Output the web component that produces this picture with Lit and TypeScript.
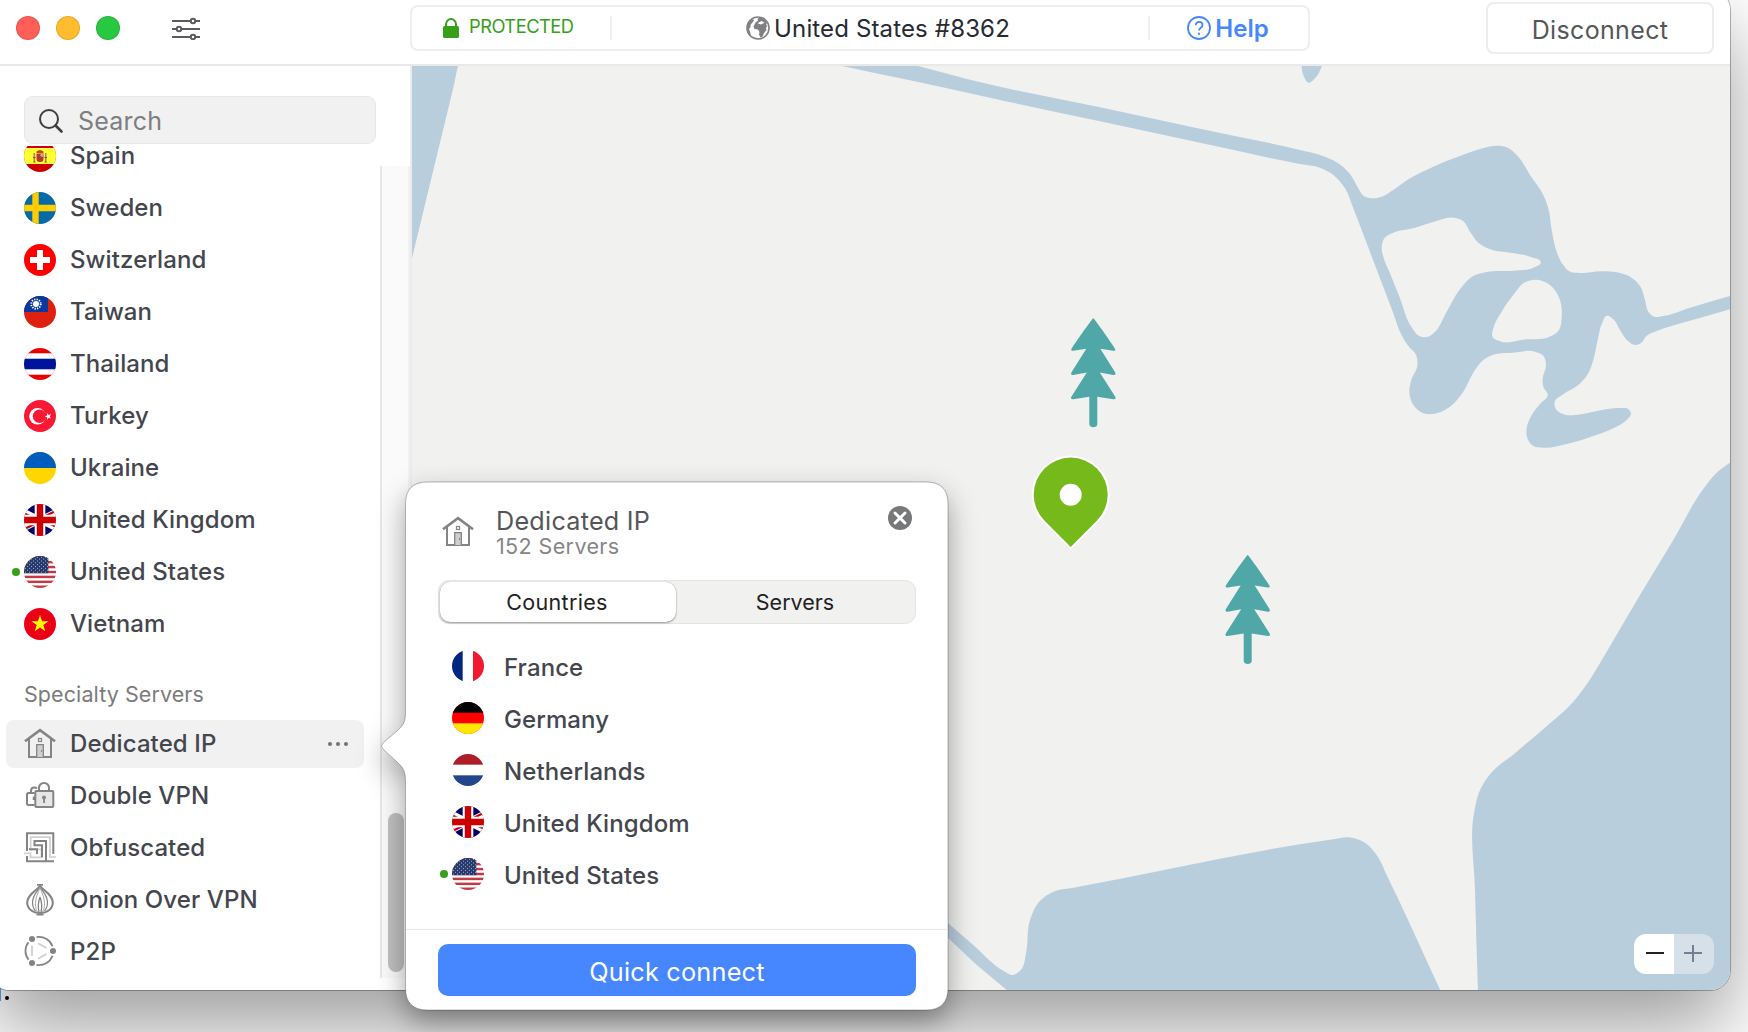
import { LitElement, html, css, svg } from "lit";
import { customElement, property } from "lit/decorators.js";

type Pt = [number, number];

/* Smooth curve through points; handles are a third of each segment. */
function smooth(pts: Pt[], closed = false): string {
  const n = pts.length;
  const at = (i: number): Pt => (closed ? pts[(i + n) % n] : pts[Math.max(0, Math.min(n - 1, i))]);
  const dir = (i: number): Pt => {
    const a = at(i - 1), b = at(i), c = at(i + 1);
    const l1 = Math.hypot(b[0] - a[0], b[1] - a[1]) || 1;
    const l2 = Math.hypot(c[0] - b[0], c[1] - b[1]) || 1;
    const x = ((b[0] - a[0]) / l1) * l2 + ((c[0] - b[0]) / l2) * l1;
    const y = ((b[1] - a[1]) / l1) * l2 + ((c[1] - b[1]) / l2) * l1;
    const l = Math.hypot(x, y) || 1;
    return [x / l, y / l];
  };
  let d = `M${pts[0][0].toFixed(1)} ${pts[0][1].toFixed(1)}`;
  const end = closed ? n : n - 1;
  for (let i = 0; i < end; i++) {
    const p = at(i), q = at(i + 1);
    const h = Math.hypot(q[0] - p[0], q[1] - p[1]) / 3;
    const u = dir(i), v = dir(i + 1);
    const c = [p[0] + u[0] * h, p[1] + u[1] * h, q[0] - v[0] * h, q[1] - v[1] * h, q[0], q[1]];
    d += "C" + c.map((k) => k.toFixed(1)).join(" ");
  }
  return closed ? d + "Z" : d;
}

const place = (ox: number, oy: number, flat: number[]): Pt[] => {
  const out: Pt[] = [];
  for (let i = 0; i < flat.length; i += 2) out.push([ox + flat[i] / 3, oy + flat[i + 1] / 3]);
  return out;
};

const lakeOuter = smooth(place(1300, 50, [
  -1260, 22, -1146, 48, -987, 90, -600, 172, -300, 236, 0, 300, 60, 315, 110, 337, 150, 372, 175, 415, 190, 437, 215, 445, 245, 440, 280, 420, 330, 385,
  400, 350, 480, 318, 550, 294, 590, 287, 620, 292, 650, 315, 690, 375, 730, 435, 745, 475, 755, 540, 770, 605,
  788, 643, 808, 664, 840, 669, 900, 664, 950, 667, 990, 680, 1020, 708, 1035, 750, 1045, 785, 1062, 800, 1090, 798,
  1170, 773, 1290, 738, 1500, 678, 1500, 718, 1290, 778, 1170, 812, 1070, 843, 1040, 857, 1022, 880, 1005, 885, 985, 874, 960, 840,
  940, 808, 921, 797, 907, 818, 893, 870, 880, 930, 862, 975, 835, 1005, 790, 1033, 764, 1056, 768, 1078, 795, 1094,
  825, 1095, 880, 1085, 960, 1074, 985, 1077, 993, 1090, 980, 1110, 940, 1135, 880, 1158, 800, 1182, 730, 1193,
  700, 1188, 682, 1165, 680, 1135, 695, 1095, 720, 1062, 743, 1035, 730, 1010, 728, 985, 738, 945, 730, 917,
  705, 905, 640, 908, 585, 913, 550, 930, 520, 968, 490, 1025, 450, 1070, 410, 1090, 370, 1090, 340, 1065,
  328, 1025, 334, 990, 352, 948, 348, 914, 325, 888, 303, 852, 280, 790, 240, 685, 200, 580, 160, 475, 135, 415,
  100, 375, 60, 353, 0, 342, -300, 278, -600, 214, -900, 150, -1170, 91, -1374, 48, -1460, 30,
]));

const islandWest = smooth(place(1300, 50, [
  245, 595, 253, 565, 280, 548, 340, 535, 410, 513, 460, 503, 488, 512, 510, 545, 535, 578, 570, 598, 630, 608,
  690, 620, 722, 638, 700, 653, 640, 662, 560, 666, 520, 678, 480, 718, 440, 785, 405, 845, 385, 860, 358, 858,
  335, 832, 300, 745, 270, 670, 250, 620,
]), true);

const islandEast = smooth(place(1300, 50, [
  710, 689, 750, 705, 778, 745, 785, 800, 775, 843, 745, 862, 680, 868, 600, 874, 578, 862, 580, 835, 605, 785,
  640, 735, 675, 697,
]), true);

const cove = smooth(place(1300, 50, [3, 40, 12, 80, 26, 98, 45, 85, 70, 40]));

const eastSea = smooth(place(1440, 440, [
  885, 60, 870, 68, 830, 98, 790, 147, 700, 300, 600, 465, 500, 635, 455, 710, 400, 785, 330, 850, 230, 935,
  150, 1003, 118, 1055, 102, 1120, 105, 1350, 114, 1660,
])) + "L1740 1000V450Z";

const southSea = smooth(place(940, 820, [
  -100, 200, 25, 310, 100, 375, 190, 452, 218, 465, 243, 449, 258, 400, 270, 300, 295, 248, 345, 213, 400, 203,
  1180, 58, 1225, 52, 1270, 65, 1312, 108, 1340, 165, 1510, 530,
])) + "L1010 996.7 L1006.7 990 L976.7 965 L948 938 L900 892Z";

const TREE =
  "M0 0C1 0 21.5 29.500 22 31C22.300 32.500 21 32.700 20 32.500L7 30.500L21.800 54C22.800 56 22 57 20 56.700L6.500 54.200L21.800 78.300C23 80.300 22 81.200 20 80.900L4 78.500V106C4 110 -4 110 -4 106V78.500L-20 80.900C-22 81.200 -23 80.300 -21.800 78.300L-6.500 54.200L-20 56.700C-22 57 -22.800 56 -21.800 54L-7 30.500L-20 32.500C-21 32.700 -22.300 32.500 -22 31C-21.500 29.500 -1 0 0 0Z";

@customElement("map-view")
export class MapView extends LitElement {
  static styles = css`
    :host { display: block; position: relative; background: #f1f1f0; overflow: hidden; }
    .land { display: block; width: 100%; height: 100%; }
    .zoom { position: absolute; right: 16px; bottom: 16px; display: flex; width: 80px; height: 40px; border-radius: 12px; overflow: hidden; }
    .key { flex: 1; display: grid; place-items: center; }
    .out { background: #fff; padding-left: 2px; }
    .in { background: #d5e0e9; padding-right: 2px; }
  `;
  render() {
    return html`
      <svg class="land" viewBox="412 66 1318 924" preserveAspectRatio="none">
        <g fill="#b9cedd">
          <path d="M405 60H460.500C457 66 456 76 454 85L405 287Z"></path>
          <path d=${lakeOuter}></path>
          <path d=${cove}></path>
          <path d=${eastSea}></path>
          <path d=${southSea}></path>
        </g>
        <g fill="#f1f1f0">
          <path d=${islandWest}></path>
          <path d=${islandEast}></path>
        </g>
        <g fill="#4fa8a7">
          <path transform="translate(1093.300 318.300)" d=${TREE}></path>
          <path transform="translate(1247.700 555)" d=${TREE}></path>
        </g>
        <path d="M1044.600 520.800A37 37 0 1 1 1096.800 520.800L1070.700 547Z" fill="#76b91b" stroke="#fff" stroke-width="4" paint-order="stroke"></path>
        <circle cx="1070.700" cy="494.700" r="11" fill="#fff"></circle>
      </svg>
      <div class="zoom">
        <div class="key out"><svg width="18" height="18"><path d="M0 8H18" stroke="#1f2126" stroke-width="2"></path></svg></div>
        <div class="key in"><svg width="18" height="18"><path d="M0 8H18M9 -1V17" stroke="#737f94" stroke-width="2"></path></svg></div>
      </div>
    `;
  }
}

const star = (cx: number, cy: number, r: number, rot = -90, inner = 0.382) => {
  let s = "";
  for (let i = 0; i < 10; i++) {
    const a = ((rot + i * 36) * Math.PI) / 180;
    const k = i % 2 ? r * inner : r;
    s += `${(cx + Math.cos(a) * k).toFixed(2)},${(cy + Math.sin(a) * k).toFixed(2)} `;
  }
  return s;
};

const bars = (a: string, b: string, c: string) => svg`
  <rect width="32" height="32" fill=${b}></rect>
  <rect width="32" height="10.670" fill=${a}></rect>
  <rect y="21.330" width="32" height="10.670" fill=${c}></rect>`;

const FLAGS: Record<string, unknown> = {
  Spain: svg`<rect width="32" height="32" fill="#c00"></rect><rect y="8" width="32" height="16" fill="#ff3"></rect>
    <path d="M12.500 13.500h7v5.500q0 3-3.500 3t-3.500-3z" fill="#c6301c"></path>
    <path d="M12.500 11.500q3.500-3 7 0v1.500h-7z" fill="#b8501e"></path><circle cx="17.800" cy="15.300" r="1.500" fill="#c9a9a9"></circle>
    <circle cx="16" cy="17.500" r="1.200" fill="#4a5a9a"></circle>
    <path d="M10.300 13v9M21.700 13v9" stroke="#a5876a" stroke-width="1.600"></path>
    <path d="M9 17.500h2.600M20.400 17.500H23M9.200 22h2.200M20.600 22h2.200" stroke="#b8401c" stroke-width="1.200"></path>`,
  Sweden: svg`<rect width="32" height="32" fill="#066aa7"></rect><path d="M8.300 0h6.400v32H8.300zM0 12.800h32v6.400H0z" fill="#fecc00"></path>`,
  Switzerland: svg`<rect width="32" height="32" fill="#f00"></rect><path d="M13 6h6v7h7v6h-7v7h-6v-7H6v-6h7z" fill="#fff"></path>`,
  Taiwan: svg`<rect width="32" height="32" fill="#de2110"></rect><rect width="24" height="16" fill="#08399c"></rect>
    <circle cx="12" cy="8" r="4.700" fill="none" stroke="#fff" stroke-width="1.900" stroke-dasharray="1.250 1.210"></circle><circle cx="12" cy="8" r="3" fill="#fff"></circle>`,
  Thailand: svg`<rect width="32" height="32" fill="#e90000"></rect><rect y="5.300" width="32" height="21.400" fill="#fff"></rect><rect y="10.700" width="32" height="10.600" fill="#00149b"></rect>`,
  Turkey: svg`<rect width="32" height="32" fill="#fb1834"></rect><circle cx="13.500" cy="16.300" r="8.300" fill="#fff"></circle><circle cx="15.500" cy="16.300" r="6.700" fill="#fb1834"></circle>
    <polygon points=${star(24.3, 16.4, 3.6, 180)} fill="#fff"></polygon>`,
  Ukraine: svg`<rect width="32" height="32" fill="#ffd600"></rect><rect width="32" height="16" fill="#005cbd"></rect>`,
  "United Kingdom": svg`<clipPath id="saltire"><path d="M30 15H60V30ZM30 15V30H0ZM30 15H0V0ZM30 15V0H60Z"></path></clipPath>
    <g transform="scale(1.06667) translate(-15 0)" fill="none"><path fill="#006" d="M0 0h60v30H0z"></path>
    <path d="M0 0L60 30M60 0L0 30" stroke="#fff" stroke-width="6"></path>
    <path d="M0 0L60 30M60 0L0 30" stroke="#c00" stroke-width="4" clip-path="url(#saltire)"></path>
    <path d="M30 0V30M0 15H60" stroke="#fff" stroke-width="10"></path>
    <path d="M30 0V30M0 15H60" stroke="#c00" stroke-width="6"></path></g>`,
  "United States": svg`<rect width="32" height="32" fill="#fff"></rect>
    ${[0, 1, 2, 3, 4, 5, 6].map((i) => svg`<rect y=${i * 4.92} width="32" height="2.460" fill="#c23a45"></rect>`)}
    <rect width="24.300" height="17.200" fill="#26396c"></rect>
    ${[0, 1, 2, 3, 4, 5, 6, 7, 8].map((r) => svg`<path d=${`M${r % 2 ? 3 : 1} ${1.3 + r * 1.85}H24`} stroke="#b9c0d4" stroke-width=".9" stroke-dasharray="1 3"></path>`)}`,
  Vietnam: svg`<rect width="32" height="32" fill="#ec0015"></rect><polygon points=${star(16, 16, 9)} fill="#ff0"></polygon>`,
  France: svg`<rect width="32" height="32" fill="#fff"></rect><rect width="10.670" height="32" fill="#00267f"></rect><rect x="21" width="11" height="32" fill="#f31830"></rect>`,
  Germany: bars("#000", "#f00", "#ffe600"),
  Netherlands: bars("#ae1c28", "#fff", "#21468b"),
};

const G = "#848484";
const L = "#cfcfcf";
const ICONS: Record<string, unknown> = {
  "Dedicated IP": svg`<g fill="none" stroke=${G} stroke-width="2"><path d="M1 13.300L16 2.200L31 13.300" stroke-width="2.600"></path><path d="M5 11V29H27V11"></path>
    <path d="M12.700 29V16.700H19.300V29" fill="#cfcfcf" stroke-width="1.300"></path><rect x="14.500" y="10.500" width="3" height="3" stroke-width="1.200"></rect><path d="M17.500 22v2" stroke-width="1"></path></g>`,
  "Double VPN": svg`<g fill="none" stroke=${G} stroke-width="2"><path d="M10.500 25H4.500Q3 25 3 23.500V14.500Q3 13 4.500 13H10.500M7 13V11Q7 7.500 10 7.500Q12 7.500 13 8.500"></path>
    <path d="M10 16.500v3.500" stroke-width="2.500"></path>
    <path d="M15 11V8.500Q15 3 20 3T25 8.500V11"></path><rect x="11.300" y="11" width="18" height="16" rx="1" fill="#e6e6e6"></rect></g>
    <circle cx="20" cy="17.500" r="2" fill=${G}></circle><rect x="19.200" y="18" width="1.800" height="5" fill=${G}></rect>`,
  Obfuscated: svg`<g fill="none" stroke-width="1.700"><path d="M0 21.300H6.500V25.300H17.500V17.300H6.700V5.200H26V25H32" stroke=${L}></path>
    <g stroke=${G} stroke-width="2"><path d="M3 19V1.300H29.300V22"></path><path d="M3 24V29.200H30"></path><path d="M22 29V9H10.500V13.300H18V25.300"></path><path d="M5 17.300H13V22"></path></g></g>`,
  "Onion Over VPN": svg`<g fill="none" stroke=${G}><path d="M16 2C12 7 3.200 11 3.200 18.500C3.200 25 9 29 16 29S28.800 25 28.800 18.500C28.800 11 20 7 16 2Z" stroke-width="2"></path>
    <path d="M15.500 4C9.500 11 5 19 11.500 27M16.500 4C22.500 11 27 19 20.500 27" stroke-width="1.200"></path>
    <path d="M15.500 5C12 13 9.500 21 13.500 28M16.500 5C20 13 22.500 21 18.500 28" stroke=${"#a9a9a9"} stroke-width="1"></path>
    <path d="M16 13C13.500 20 14 24 15 28M16 13C18.500 20 18 24 17 28" stroke-width="1.300"></path><path d="M12.500 30.700H19.500M13 .8H19" stroke-width="1.800"></path></g>`,
  P2P: svg`<g fill="none" stroke=${G} stroke-width="1.800"><path d="M4.500 6.300A14 14 0 0 0 4.500 23.700"></path><path d="M12.500 1.200A14.300 14.300 0 0 1 28.500 10.300"></path><path d="M12.500 28.800A14.300 14.300 0 0 0 28.500 19.700"></path></g>
    <path d="M8 9.700V20M14 7.300L22.500 12M14 22.700L22.500 18" stroke=${L} stroke-width="1.800"></path>
    <g fill=${G}><circle cx="8" cy="3" r="3"></circle><circle cx="29" cy="15" r="3"></circle><circle cx="8" cy="27" r="3"></circle></g>`,
};

@customElement("server-row")
export class ServerRow extends LitElement {
  @property() name = "";
  @property({ type: Boolean }) active = false;
  @property({ type: Boolean }) selected = false;
  static styles = css`
    :host { display: block; box-sizing: border-box; height: 52px; padding: 2px 0; }
    .row { position: relative; display: flex; align-items: center; height: 48px; padding-left: 18px; border-radius: 8px;
      font: 500 24px Inter, "Liberation Sans", sans-serif; letter-spacing: 0.1px; color: #44464e; white-space: nowrap; }
    .selected { background: #f1f1f1; }
    .pic { width: 32px; height: 32px; flex: none; margin-right: var(--row-gap, 14px); }
    .flag { border-radius: 50%; overflow: hidden; }
    .label { position: relative; top: var(--row-drop, -0.5px); }
    .on { position: absolute; left: 6px; top: 20px; width: 8px; height: 8px; border-radius: 50%; background: #36a01b; }
    .more { margin-left: auto; margin-right: 15px; }
  `;
  render() {
    const flag = FLAGS[this.name];
    return html`<div class="row ${this.selected ? "selected" : ""}">
      ${this.active ? html`<i class="on"></i>` : ""}
      <svg class="pic ${flag ? "flag" : ""}" viewBox="0 0 32 32">${flag ?? ICONS[this.name]}</svg>
      <span class="label">${this.name}</span>
      ${this.selected
        ? html`<svg class="more" width="22" height="6"><g fill="#77777b"><circle cx="3" cy="3" r="2.100"></circle><circle cx="11" cy="3" r="2.100"></circle><circle cx="19" cy="3" r="2.100"></circle></g></svg>`
        : ""}
    </div>`;
  }
}

@customElement("side-panel")
export class SidePanel extends LitElement {
  static styles = css`
    :host { display: grid; grid-template-columns: 380px 1fr; background: #fff; border-right: 2px solid #ebebeb; height: 924px;
      font-family: Inter, "Liberation Sans", sans-serif; }
    .main { display: flex; flex-direction: column; min-width: 0; }
    .search { box-sizing: border-box; display: flex; align-items: center; width: 352px; height: 48px; margin: 30px 0 2px 24px; padding: 1px 0 0 13px;
      background: #f1f1f1; border: 1px solid #e6e6e6; border-radius: 9px; font-size: 25px; color: #7d7e81; flex: none; letter-spacing: 0.2px; }
    .search svg { margin-right: 14px; }
    .list { overflow: hidden; padding: 0 16px 0 6px; height: 840px; }
    .first { margin-top: -16px; }
    .group { height: 66px; line-height: 88px; padding-left: 18px; font-size: 21.500px; color: #7b7b7d; letter-spacing: 0.080px; margin-bottom: 2px; }
    .track { margin-top: 100px; height: 812px; box-sizing: border-box; border-left: 2px solid #e7e7e7; background: #fafafa; border-right: 2px solid #f1f1f1; }
    .thumb { width: 16px; height: 159px; margin: 647px 0 0 6px; border-radius: 8px; background: #bfbfbf; }
  `;
  render() {
    const countries = ["Spain", "Sweden", "Switzerland", "Taiwan", "Thailand", "Turkey", "Ukraine", "United Kingdom", "United States", "Vietnam"];
    const special = ["Dedicated IP", "Double VPN", "Obfuscated", "Onion Over VPN", "P2P"];
    return html`
      <div class="main">
        <div class="search">
          <svg width="26" height="26" fill="none" stroke="#3e3e40"><circle cx="11" cy="11" r="9" stroke-width="2"></circle><path d="M17.500 17.500L23.500 23.500" stroke-width="2.600" stroke-linecap="round"></path></svg>
          Search
        </div>
        <div class="list">
          <div class="first">${countries.map((c) => html`<server-row name=${c} ?active=${c === "United States"}></server-row>`)}</div>
          <div class="group">Specialty Servers</div>
          ${special.map((c) => html`<server-row name=${c} ?selected=${c === "Dedicated IP"}></server-row>`)}
        </div>
      </div>
      <div class="track"><div class="thumb"></div></div>
    `;
  }
}

@customElement("title-bar")
export class TitleBar extends LitElement {
  static styles = css`
    :host { display: grid; grid-template-columns: 410px 900px 1fr; height: 64px; border-bottom: 2px solid #e9e9e9; background: #fff;
      font-family: Inter, "Liberation Sans", sans-serif; align-items: start; white-space: nowrap; }
    .left { display: flex; align-items: center; gap: 16px; padding: 16px 0 0 16px; }
    .light { width: 24px; height: 24px; border-radius: 50%; box-sizing: border-box; border: 1px solid rgba(0, 0, 0, 0.1); }
    .red { background: #ff5f57; } .amber { background: #febc2e; } .green { background: #28c840; }
    .tune { margin-left: 36px; }
    .status { box-sizing: border-box; display: grid; grid-template-columns: 198px 2px 536px 2px 1fr; align-items: center; height: 46px; margin-top: 5px; border: 2px solid #ededf2; border-radius: 8px; }
    .cell { display: flex; align-items: center; height: 42px; }
    .rule { height: 24px; background: #ededf2; }
    .safe { padding-left: 31px; gap: 10px; color: #36a01b; font-size: 18.300px; letter-spacing: -0.5px; }
    .safe span { position: relative; top: -2px; }
    .place { justify-content: center; gap: 4px; color: #262a33; font-size: 24px; padding-right: 4px; letter-spacing: 0.14px; }
    .help { justify-content: center; gap: 4px; color: #4687ff; font-size: 24px; font-weight: 600; padding-right: 2px; }
    .off { box-sizing: border-box; display: grid; place-items: center; justify-self: end; width: 228px; height: 52px; margin: 2px 16px 0 0; padding-top: 3px; border: 2px solid #ededf2; border-radius: 8px; font-size: 25px; color: #55565a; letter-spacing: 0.36px; }
  `;
  render() {
    return html`
      <div class="left">
        <i class="light red"></i><i class="light amber"></i><i class="light green"></i>
        <svg class="tune" width="28" height="24" fill="none" stroke="#5c5c60" stroke-width="2">
          <path d="M0 5H18.500M24 5H28M0 13H4M10 13H28M0 21H18.500M24 21H28"></path>
          <circle cx="21" cy="5" r="2.200"></circle><circle cx="7" cy="13" r="2.200"></circle><circle cx="21" cy="21" r="2.200"></circle>
        </svg>
      </div>
      <div class="status">
        <div class="cell safe">
          <svg width="16" height="20"><rect y="8" width="16" height="12" rx="1.500" fill="#36a01b"></rect><path d="M3 9V6.500a5 5.500 0 0 1 10 0V9" fill="none" stroke="#36a01b" stroke-width="2"></path></svg>
          <span>PROTECTED</span>
        </div>
        <i class="rule"></i>
        <div class="cell place">
          <svg width="24" height="24"><circle cx="12" cy="12" r="11" fill="#fff" stroke="#808083" stroke-width="1.600"></circle>
            <path d="M9.500 6.500L12 4.500L11.500 2.500L15 1.500L19 4L21.500 8L20 7.500L21 10.500L20 12L20.500 14L18 17L16.500 20.500L14.500 21.500L13 18.500L13.500 16L12 13.500L8.500 13L7.500 10.500Z" fill="#808083"></path>
            <path d="M1.500 8L4 5L7 3L8 4.500L6 7L4.500 9L4.500 11L3 13L4.200 16L5 19.500L2.500 16.500L1 12Z" fill="#808083"></path><path d="M11.500 7.200L15 8.400L18.500 6.800L15.500 5Z" fill="#fff"></path></svg>
          <span>United States #8362</span>
        </div>
        <i class="rule"></i>
        <div class="cell help">
          <svg width="24" height="24" fill="none" stroke="#4687ff" stroke-width="1.800"><circle cx="12" cy="12" r="11"></circle><path d="M8.700 9.300C8.700 4.700 15.500 5 15.500 9.200C15.500 11.800 12 11.800 12 14.500"></path><path d="M12 16.700V18.700" stroke-width="2"></path></svg>
          <span>Help</span>
        </div>
      </div>
      <div class="off">Disconnect</div>
    `;
  }
}

@customElement("detail-popover")
export class DetailPopover extends LitElement {
  static styles = css`
    :host { display: block; font-family: Inter, "Liberation Sans", sans-serif; white-space: nowrap; }
    .shape { position: absolute; left: -60px; top: -60px; overflow: visible; }
    .body { position: relative; display: flex; flex-direction: column; width: 542px; height: 528px; }
    .head { display: flex; height: 98px; padding: 0 36px 0 36px; box-sizing: border-box; }
    .house { margin-top: 34px; width: 32px; height: 32px; }
    .names { margin: 24px auto 0 22px; display: flex; flex-direction: column; }
    .title { font-size: 25.200px; line-height: 30px; color: #55565a; letter-spacing: 0.250px; }
    .count { font-size: 21.500px; line-height: 20px; color: #858588; letter-spacing: 0.380px; }
    .close { margin-top: 24px; }
    .tabs { box-sizing: border-box; display: grid; grid-template-columns: 236px 1fr; flex: none; height: 44px; margin: 0 32px; padding: 1px; border: 1px solid #e4e4e4; border-radius: 11px; background: #f1f1f0; font-size: 21.500px; color: #1f2024; }
    .tab { display: grid; place-items: center; }
    .on { background: #fff; border-radius: 10px; padding-right: 2px; letter-spacing: 0.300px; box-shadow: 0 1px 2px rgba(0, 0, 0, 0.35), 0 0 1px rgba(0, 0, 0, 0.3); }
    .rows { padding: 16px 28px 29px; --row-gap: 20px; --row-drop: 1.500px; }
    .foot { border-top: 1px solid #e9e9eb; padding: 14px 32px 0; }
    .go { height: 52px; border-radius: 10px; background: #4687ff; color: #fff; display: grid; place-items: center; font-size: 25.300px; padding-top: 2px; box-sizing: border-box; letter-spacing: 0.200px; }
  `;
  render() {
    const list = ["France", "Germany", "Netherlands", "United Kingdom", "United States"];
    return html`
      <svg class="shape" width="662" height="648" viewBox="-60 -60 662 648">
        <defs><filter id="sh" x="-20%" y="-20%" width="140%" height="140%"><feDropShadow dx="0" dy="12" stdDeviation="14" flood-color="#000" flood-opacity=".36"></feDropShadow></filter></defs>
        <path filter="url(#sh)" d="M21.500 0H520Q542 0 542 22V506Q542 528 520 528H21.500Q-.5 528 -.5 506V300C-.5 290 -2 286 -9 280L-23 267Q-26 264 -23 261L-9 249C-2 243 -.5 239 -.5 230V22Q-.5 0 21.500 0Z" fill="#fff" stroke="rgba(0,0,0,.28)" stroke-width="1"></path>
      </svg>
      <div class="body">
        <div class="head">
          <svg class="house" viewBox="0 0 32 32">${ICONS["Dedicated IP"]}</svg>
          <div class="names"><span class="title">Dedicated IP</span><span class="count">152 Servers</span></div>
          <svg class="close" width="24" height="24"><circle cx="12" cy="12" r="12" fill="#77787a"></circle><path d="M7 7L17 17M17 7L7 17" stroke="#fff" stroke-width="3" stroke-linecap="round"></path></svg>
        </div>
        <div class="tabs"><div class="tab on">Countries</div><div class="tab">Servers</div></div>
        <div class="rows">${list.map((c) => html`<server-row name=${c} ?active=${c === "United States"}></server-row>`)}</div>
        <div class="foot"><div class="go">Quick connect</div></div>
      </div>
    `;
  }
}

@customElement("app-root")
export class AppRoot extends LitElement {
  static styles = css`
    :host { display: block; position: relative; width: 1748px; height: 1032px; overflow: hidden; background: #fff; }
    .window { box-sizing: border-box; position: relative; width: 1740px; height: 1000px; margin: -10px 0 0 -10px; padding: 10px 0 0 10px; background: #fff; border-radius: 20px; overflow: hidden;
      box-shadow: 0 0 0 1px rgba(0, 0, 0, 0.28), 0 37px 80px rgba(0, 0, 0, 0.39); }
    .content { display: grid; grid-template-columns: 412px 1318px; height: 924px; }
    .pop { position: absolute; left: 406px; top: 482px; }
    .peek { position: absolute; left: 0; top: 988px; width: 1px; height: 13px; background: #4c86c4; }
    .dot { position: absolute; left: 5px; top: 996px; width: 4px; height: 4px; border-radius: 50%; background: #000; }
  `;
  render() {
    return html`
      <div class="window">
        <title-bar></title-bar>
        <div class="content"><side-panel></side-panel><map-view></map-view></div>
      </div>
      <i class="peek"></i><i class="dot"></i>
      <detail-popover class="pop"></detail-popover>
    `;
  }
}
